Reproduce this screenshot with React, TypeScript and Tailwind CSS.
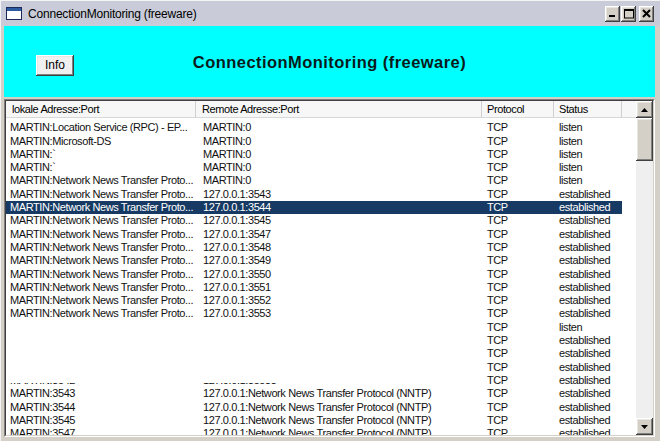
import React from "react";

type Row = { a: string; b: string; c: string; d: string; sel?: boolean; glitch?: boolean };

const NNTP = "MARTIN:Network News Transfer Proto...";
const R_NNTP = "127.0.0.1:Network News Transfer Protocol (NNTP)";

const rows: Row[] = [
  { a: "MARTIN:Location Service (RPC) - EP...", b: "MARTIN:0", c: "TCP", d: "listen" },
  { a: "MARTIN:Microsoft-DS", b: "MARTIN:0", c: "TCP", d: "listen" },
  { a: "MARTIN:`", b: "MARTIN:0", c: "TCP", d: "listen" },
  { a: "MARTIN:`", b: "MARTIN:0", c: "TCP", d: "listen" },
  { a: NNTP, b: "MARTIN:0", c: "TCP", d: "listen" },
  { a: NNTP, b: "127.0.0.1:3543", c: "TCP", d: "established" },
  { a: NNTP, b: "127.0.0.1:3544", c: "TCP", d: "established", sel: true },
  { a: NNTP, b: "127.0.0.1:3545", c: "TCP", d: "established" },
  { a: NNTP, b: "127.0.0.1:3547", c: "TCP", d: "established" },
  { a: NNTP, b: "127.0.0.1:3548", c: "TCP", d: "established" },
  { a: NNTP, b: "127.0.0.1:3549", c: "TCP", d: "established" },
  { a: NNTP, b: "127.0.0.1:3550", c: "TCP", d: "established" },
  { a: NNTP, b: "127.0.0.1:3551", c: "TCP", d: "established" },
  { a: NNTP, b: "127.0.0.1:3552", c: "TCP", d: "established" },
  { a: NNTP, b: "127.0.0.1:3553", c: "TCP", d: "established" },
  { a: "", b: "", c: "TCP", d: "listen" },
  { a: "", b: "", c: "TCP", d: "established" },
  { a: "", b: "", c: "TCP", d: "established" },
  { a: "", b: "", c: "TCP", d: "established" },
  { a: "MARTIN:3542", b: "127.0.0.1:35533", c: "TCP", d: "established", glitch: true },
  { a: "MARTIN:3543", b: R_NNTP, c: "TCP", d: "established" },
  { a: "MARTIN:3544", b: R_NNTP, c: "TCP", d: "established" },
  { a: "MARTIN:3545", b: R_NNTP, c: "TCP", d: "established" },
  { a: "MARTIN:3547", b: R_NNTP, c: "TCP", d: "established" },
];

const btn3d =
  "bg-[#d4d0c8] shadow-[inset_-1px_-1px_#404040,inset_1px_1px_#ffffff,inset_-2px_-2px_#808080,inset_2px_2px_#e8e6e0]";

function Cell({ text, glitch, className }: { text: string; glitch?: boolean; className: string }) {
  if (glitch) {
    return (
      <div className={className}>
        <div className="mt-[9.2px] h-[1.8px] overflow-hidden">
          <div className="-mt-[9.2px] leading-[13.3px]">{text}</div>
        </div>
      </div>
    );
  }
  return <div className={className}>{text}</div>;
}

function TitleButton({ kind }: { kind: "min" | "max" | "close" }) {
  return (
    <div className={`w-[15px] h-[16px] flex items-center justify-center ${btn3d}`}>
      {kind === "min" && (
        <svg width="9" height="9" viewBox="0 0 9 9">
          <rect x="1" y="6" width="6" height="2" fill="#000" />
        </svg>
      )}
      {kind === "max" && (
        <svg width="10" height="10" viewBox="0 0 10 10">
          <rect x="0.5" y="0.5" width="9" height="8.5" fill="none" stroke="#000" strokeWidth="1" />
          <rect x="0" y="0" width="10" height="2" fill="#000" />
        </svg>
      )}
      {kind === "close" && (
        <svg width="9" height="9" viewBox="0 0 9 9">
          <path d="M1 1 L8 8 M8 1 L1 8" stroke="#000" strokeWidth="2" />
        </svg>
      )}
    </div>
  );
}

export default function App() {
  return (
    <div className="w-[660px] h-[441px] overflow-hidden bg-[#d4d0c8] flex flex-col font-['Liberation_Sans',Arial,sans-serif] text-[#111] border-l border-t border-[#f4f4f4]">
      {/* title bar */}
      <div className="h-[25px] shrink-0 bg-[#c9ccd8] flex items-center pl-[5px] pr-[6px]">
        <svg width="16" height="13" viewBox="0 0 16 13">
          <rect x="0.5" y="0.5" width="15" height="12" fill="#ffffff" stroke="#1a2a5a" />
          <rect x="1" y="1" width="14" height="3" fill="#2d5aa0" />
        </svg>
        <span className="ml-[6px] text-[12px] tracking-[-0.2px] text-black">ConnectionMonitoring (freeware)</span>
        <div className="flex-1" />
        <div className="flex items-center gap-[1px]">
          <TitleButton kind="min" />
          <TitleButton kind="max" />
          <div className="w-[1px]" />
          <TitleButton kind="close" />
        </div>
      </div>

      <div className="flex-1 min-h-0 flex flex-col pl-[3px] pr-[5px]">
        {/* cyan panel */}
        <div className="h-[71px] shrink-0 bg-[#00ffff] grid grid-cols-[1fr_auto_1fr] items-center">
          <div className="pl-[32px] pt-[7px]">
            <div className={`w-[38px] h-[21px] flex items-center justify-center text-[12px] text-black ${btn3d} bg-[#f0f0f0]`}>
              Info
            </div>
          </div>
          <div className="pt-[1px] text-[16.5px] font-bold tracking-[0.45px] text-[#0a1a1a]">ConnectionMonitoring (freeware)</div>
          <div />
        </div>

        <div className="h-[2px] shrink-0" />

        {/* list */}
        <div className="flex-1 min-h-0 border border-t-[#808080] border-l-[#808080] border-r-[#ffffff] border-b-[#ffffff]">
          <div className="h-full border border-t-[#404040] border-l-[#404040] border-r-[#d4d0c8] border-b-[#d4d0c8] bg-white flex overflow-hidden">
            <div className="flex-1 min-w-0 flex flex-col text-[11px] tracking-[-0.4px]">
              {/* header */}
              <div className="h-[17px] shrink-0 flex bg-[#f7f7f7] border-b border-[#d8d8d8] leading-[16px] text-black">
                <div className="w-[190px] pl-[6px] border-r border-[#cfcfcf]">lokale Adresse:Port</div>
                <div className="w-[286px] pl-[6px] border-r border-[#cfcfcf]">Remote Adresse:Port</div>
                <div className="w-[72px] pl-[5px] border-r border-[#cfcfcf]">Protocol</div>
                <div className="w-[68px] pl-[5px] border-r border-[#cfcfcf]">Status</div>
                <div className="flex-1" />
              </div>
              {/* rows */}
              <div className="pt-[3.3px]">
                {rows.map((r, i) => (
                  <div
                    key={i}
                    className={`w-[616px] h-[13.3px] leading-[13.3px] flex whitespace-nowrap ${
                      r.sel ? "bg-[#163a63] text-white" : ""
                    }`}
                  >
                    <Cell text={r.a} glitch={r.glitch} className="w-[190px] pl-[4px] overflow-hidden" />
                    <Cell text={r.b} glitch={r.glitch} className="w-[286px] pl-[7px] overflow-hidden" />
                    <div className="w-[72px] pl-[5px]">{r.c}</div>
                    <div className="w-[68px] pl-[5px]">{r.d}</div>
                  </div>
                ))}
              </div>
            </div>

            {/* scrollbar */}
            <div className="w-[17px] shrink-0 bg-[#efefef] flex flex-col">
              <div className={`h-[17px] shrink-0 flex items-center justify-center ${btn3d}`}>
                <svg width="7" height="4" viewBox="0 0 7 4">
                  <path d="M3.5 0 L7 4 L0 4 Z" fill="#000" />
                </svg>
              </div>
              <div className={`h-[43px] shrink-0 ${btn3d}`} />
              <div className="flex-1" />
              <div className={`h-[17px] shrink-0 flex items-center justify-center ${btn3d}`}>
                <svg width="7" height="4" viewBox="0 0 7 4">
                  <path d="M0 0 L7 0 L3.5 4 Z" fill="#000" />
                </svg>
              </div>
            </div>
          </div>
        </div>
        <div className="h-[4px] shrink-0" />
      </div>
    </div>
  );
}
